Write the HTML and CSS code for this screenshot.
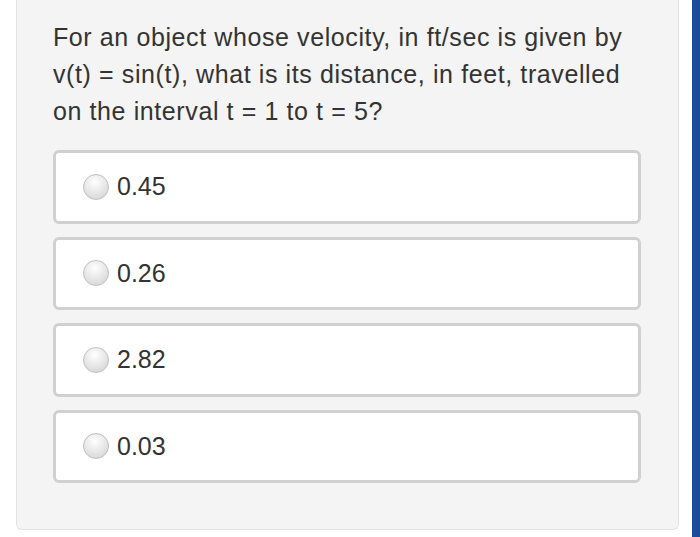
FILE: index.html
```html
<!DOCTYPE html>
<html>
<head>
<meta charset="utf-8">
<link rel="stylesheet" href="styles.css">
</head>
<body>
<div class="page">
  <div class="card">
    <p class="question">For an object whose velocity, in ft/sec is given by v(t) = sin(t), what is its distance, in feet, travelled on the interval t = 1 to t = 5?</p>
    <div class="options">
      <label class="option"><span class="radio"></span><span class="label">0.45</span></label>
      <label class="option"><span class="radio"></span><span class="label">0.26</span></label>
      <label class="option"><span class="radio"></span><span class="label">2.82</span></label>
      <label class="option"><span class="radio"></span><span class="label">0.03</span></label>
    </div>
  </div>
  <div class="sidebar"></div>
</div>
</body>
</html>
```
FILE: styles.css
```css
html, body {
  margin: 0;
  padding: 0;
  background: #ffffff;
}
body {
  font-family: "Liberation Sans", Arial, Helvetica, sans-serif;
  color: #333333;
}
.page {
  display: flex;
  height: 537px;
  align-items: flex-start;
}
.card {
  margin-left: 16px;
  width: 663px;
  height: 530px;
  box-sizing: border-box;
  background: #f4f4f4;
  border: 1px solid #e2e2e2;
  border-top: none;
  border-radius: 0 0 6px 6px;
  padding: 19px 37px 0 36px;
}
.question {
  margin: 0;
  max-width: 580px;
  font-size: 25px;
  letter-spacing: 0.6px;
  line-height: 37px;
  color: #333333;
}
.options {
  margin-top: 20px;
  display: flex;
  flex-direction: column;
  gap: 13px;
}
.option {
  display: flex;
  align-items: center;
  height: 73.5px;
  box-sizing: border-box;
  background: #ffffff;
  border: 3px solid #d0d0d0;
  border-radius: 6px;
  padding-left: 27px;
  gap: 8px;
}
.radio {
  width: 26px;
  height: 26px;
  box-sizing: border-box;
  border-radius: 50%;
  border: 1px solid #c0c0c0;
  background: radial-gradient(circle at 45% 30%, #ffffff 0%, #eeeeee 35%, #cfcfcf 100%);
}
.label {
  font-size: 25px;
  color: #333333;
}
.sidebar {
  margin-left: 13px;
  width: 8px;
  height: 537px;
  background: #1a4a9a;
}
```
